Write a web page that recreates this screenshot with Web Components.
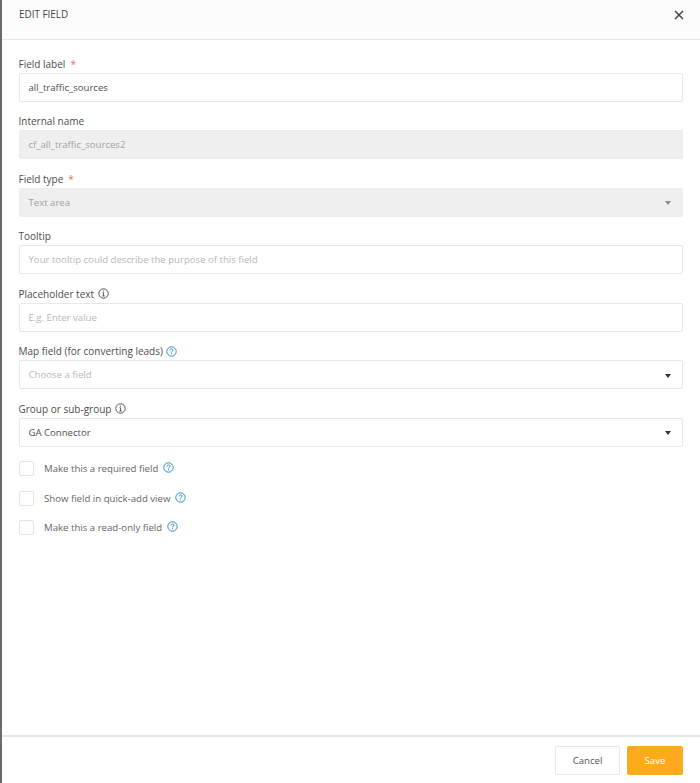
<!DOCTYPE html>
<html>
<head>
<meta charset="utf-8">
<title>Edit field</title>
<style>
  html, body { margin: 0; padding: 0; height: 100%; background: #fff; }
  body { font-family: "Open Sans", "Noto Sans", sans-serif; overflow: hidden; }
</style>
</head>
<body>

<edit-field-panel>
  <form-field label="Field label" required>
    <input-box value="all_traffic_sources"></input-box>
  </form-field>
  <form-field label="Internal name">
    <input-box value="cf_all_traffic_sources2" disabled></input-box>
  </form-field>
  <form-field label="Field type" required>
    <input-box value="Text area" disabled caret></input-box>
  </form-field>
  <form-field label="Tooltip">
    <input-box placeholder="Your tooltip could describe the purpose of this field"></input-box>
  </form-field>
  <form-field label="Placeholder text" hint="info">
    <input-box placeholder="E.g. Enter value"></input-box>
  </form-field>
  <form-field label="Map field (for converting leads)" hint="help">
    <input-box placeholder="Choose a field" caret></input-box>
  </form-field>
  <form-field label="Group or sub-group" hint="info">
    <input-box value="GA Connector" caret></input-box>
  </form-field>
  <check-list>
    <check-row label="Make this a required field"></check-row>
    <check-row label="Show field in quick-add view"></check-row>
    <check-row label="Make this a read-only field"></check-row>
  </check-list>
</edit-field-panel>

<script>
class HintIcon extends HTMLElement {
  connectedCallback() {
    const help = this.getAttribute('type') === 'help';
    const shadow = this.attachShadow({mode: 'open'});
    shadow.innerHTML = `
      <style>
        :host { display: inline-flex; width: 11px; height: 11px; }
        svg { display: block; }
      </style>
      ${help ? `
      <svg width="11" height="11" viewBox="0 0 11 11" fill="none" stroke="#2f8fc4">
        <circle cx="5.5" cy="5.5" r="4.7" stroke-width="1"/>
        <path d="M4 4.4C4 3.5 4.7 3 5.5 3S7 3.5 7 4.3C7 5.3 5.5 5.3 5.5 6.4" stroke-width="1"/>
        <path d="M5.5 7.4V8.3" stroke-width="1"/>
      </svg>` : `
      <svg width="11" height="11" viewBox="0 0 11 11" fill="none" stroke="#555">
        <circle cx="5.5" cy="5.5" r="4.7" stroke-width="1"/>
        <path d="M5.5 2.6V3.6" stroke-width="1.1"/>
        <path d="M4.5 4.8H5.6V7.9M4.4 8H6.7" stroke-width="1"/>
      </svg>`}
    `;
  }
}
customElements.define('hint-icon', HintIcon);

class FormField extends HTMLElement {
  connectedCallback() {
    const shadow = this.attachShadow({mode: 'open'});
    const hint = this.getAttribute('hint');
    shadow.innerHTML = `
      <style>
        :host { display: block; margin-bottom: 7.5px; }
        .label {
          box-sizing: border-box;
          display: flex;
          align-items: center;
          height: 21px;
          padding-top: 3px;
          font-size: 10px;
          font-weight: 500;
          color: #4d4d4d;
        }
        .req { color: #ec6a6e; margin-left: 5px; font-weight: 400; }
        hint-icon { margin-left: 3.5px; }
      </style>
      <div class="label">
        <span>${this.getAttribute('label')}</span>
        ${this.hasAttribute('required') ? '<span class="req">*</span>' : ''}
        ${hint ? `<hint-icon type="${hint}"></hint-icon>` : ''}
      </div>
      <slot></slot>
    `;
  }
}
customElements.define('form-field', FormField);

class InputBox extends HTMLElement {
  connectedCallback() {
    const shadow = this.attachShadow({mode: 'open'});
    const value = this.getAttribute('value');
    const text = value || this.getAttribute('placeholder') || '';
    const disabled = this.hasAttribute('disabled');
    shadow.innerHTML = `
      <style>
        :host { display: block; }
        .box {
          box-sizing: border-box;
          height: 29px;
          display: flex;
          align-items: center;
          justify-content: space-between;
          padding: 0 11px 0 9px;
          border: 1px solid ${disabled ? '#ececec' : '#e8e8e8'};
          border-radius: 2px;
          background: ${disabled ? '#efefef' : '#fff'};
          font-size: 9.6px;
          color: ${disabled ? '#a3a3a3' : value ? '#4f4f4f' : '#b8b8b8'};
        }
        .caret {
          width: 0;
          height: 0;
          border-left: 3.5px solid transparent;
          border-right: 3.5px solid transparent;
          border-top: 4.5px solid ${disabled ? '#8d8d8d' : '#333'};
          margin-top: 2px;
        }
      </style>
      <div class="box">
        <span>${text}</span>
        ${this.hasAttribute('caret') ? '<span class="caret"></span>' : ''}
      </div>
    `;
  }
}
customElements.define('input-box', InputBox);

class CheckList extends HTMLElement {
  constructor() {
    super();
    this.attachShadow({mode: 'open'}).innerHTML = `
      <style>:host { display: block; padding-top: 7px; }</style>
      <slot></slot>
    `;
  }
}
customElements.define('check-list', CheckList);

class CheckRow extends HTMLElement {
  connectedCallback() {
    const shadow = this.attachShadow({mode: 'open'});
    shadow.innerHTML = `
      <style>
        :host {
          display: flex;
          align-items: center;
          height: 15px;
          margin-bottom: 14.5px;
          font-size: 9.65px;
          color: #666;
        }
        .check {
          box-sizing: border-box;
          width: 15px;
          height: 15px;
          border: 1px solid #e4e4e4;
          border-radius: 2px;
          background: #fff;
          margin-right: 10.5px;
        }
        hint-icon { margin-left: 5px; margin-top: -2px; }
      </style>
      <span class="check"></span>
      <span>${this.getAttribute('label')}</span>
      <hint-icon type="help"></hint-icon>
    `;
  }
}
customElements.define('check-row', CheckRow);

class EditFieldPanel extends HTMLElement {
  constructor() {
    super();
    const shadow = this.attachShadow({mode: 'open'});
    shadow.innerHTML = `
      <style>
        :host {
          display: flex;
          flex-direction: column;
          box-sizing: border-box;
          height: 783px;
          border-left: 2px solid #6a6a6a;
          background: #fff;
        }
        header {
          flex: none;
          box-sizing: border-box;
          height: 40px;
          display: flex;
          align-items: center;
          justify-content: space-between;
          padding: 0 16px 11px 17px;
          background: #fcfcfc;
          border-bottom: 1px solid #e6e6e6;
        }
        h1 {
          margin: 0;
          font-size: 9.9px;
          font-weight: 500;
          color: #444;
        }
        .close { display: block; margin-top: 1px; }
        main {
          flex: 1;
          padding: 11.5px 17px 0 16.5px;
        }
        footer {
          flex: none;
          box-sizing: border-box;
          height: 48px;
          display: flex;
          justify-content: flex-end;
          gap: 7px;
          padding: 8.5px 17px 0 0;
          border-top: 2px solid #e6e6e6;
        }
        button {
          box-sizing: border-box;
          height: 29px;
          border-radius: 2px;
          font: 400 9.6px "Open Sans", "Noto Sans", sans-serif;
          padding: 0;
        }
        .cancel { width: 65px; background: #fff; border: 1px solid #e8e8e8; color: #555; }
        .save { width: 56px; background: #fdab1d; border: 1px solid #fdab1d; color: #fff; font-weight: 500; }
      </style>
      <header>
        <h1>EDIT FIELD</h1>
        <svg class="close" width="10" height="10" viewBox="0 0 10 10" fill="none" stroke="#444" stroke-width="1.5">
          <path d="M1 1L9 9M9 1L1 9"/>
        </svg>
      </header>
      <main><slot></slot></main>
      <footer>
        <button class="cancel">Cancel</button>
        <button class="save">Save</button>
      </footer>
    `;
  }
}
customElements.define('edit-field-panel', EditFieldPanel);
</script>
</body>
</html>
